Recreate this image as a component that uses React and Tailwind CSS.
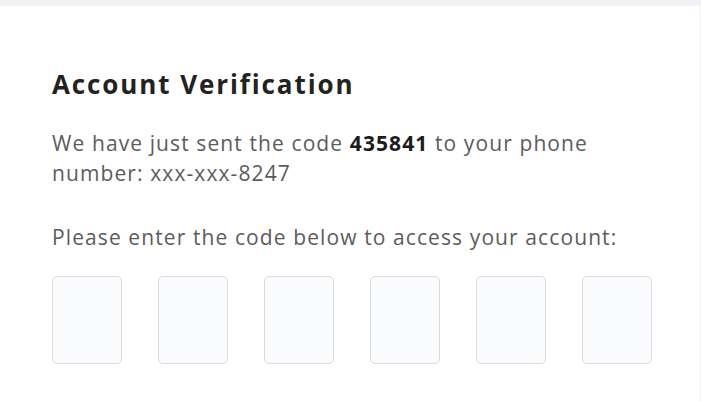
import React from 'react';

export default function App() {
    const digits = ['', '', '', '', '', ''];

    return (
        <div className="h-[401px] w-[701px] overflow-hidden bg-[#f1f2f5] pt-[6px] font-['Open_Sans',sans-serif]">
            <div className="h-full border-r border-[#eef0f2] bg-white px-[52px] pt-[63px]">
                {/* Title */}
                <h1 className="text-[26px] font-bold leading-[30px] tracking-[1.9px] text-[#222]">Account Verification</h1>

                {/* Message */}
                <p className="mt-[29px] w-[600px] text-[21px] leading-[30px] tracking-[1.1px] text-[#5c5c5c]">
                    We have just sent the code <span className="font-bold text-[#1c1c1c]">435841</span> to your phone number: xxx-xxx-8247
                </p>

                <p className="mt-[34px] text-[21px] leading-[30px] tracking-[1.1px] text-[#5c5c5c]">
                    Please enter the code below to access your account:
                </p>

                {/* Code inputs */}
                <div className="mt-[24px] flex w-[600px] justify-between">
                    {digits.map((d, i) => (
                        <input
                            key={i}
                            type="text"
                            maxLength={1}
                            defaultValue={d}
                            className="h-[88px] w-[70px] rounded-[5px] border border-[#d9dadd] bg-[#fafbfd] text-center text-2xl outline-none"
                        />
                    ))}
                </div>
            </div>
        </div>
    );
}
